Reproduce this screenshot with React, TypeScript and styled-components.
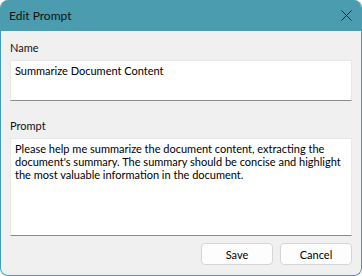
import styled, { createGlobalStyle } from 'styled-components';

const GlobalStyle = createGlobalStyle`
  html, body {
    margin: 0;
    padding: 0;
    background: #ffffff;
  }
  body {
    font-family: Lato, "Noto Sans", sans-serif;
  }
`;

const Window = styled.div`
  width: 362px;
  height: 276px;
  box-sizing: border-box;
  border: 1px solid #4a9cae;
  border-top: none;
  border-radius: 8px;
  overflow: hidden;
  background: #f0f0f0;
  display: flex;
  flex-direction: column;
`;

const TitleBar = styled.div`
  height: 31px;
  flex: none;
  background: #4a9cae;
  display: flex;
  align-items: center;
  justify-content: space-between;
  padding: 0 7px 0 8px;
  color: #111;
  font-size: 12px;
`;

const CloseButton = styled.button`
  border: none;
  background: transparent;
  padding: 0;
  width: 16px;
  height: 16px;
  display: flex;
  align-items: center;
  justify-content: center;
  cursor: pointer;
`;

const Body = styled.div`
  flex: 1;
  display: flex;
  flex-direction: column;
  padding: 9px;
`;

const Label = styled.div<{ $top?: number }>`
  font-size: 11px;
  line-height: 16px;
  color: #111;
  margin-top: ${(p) => p.$top ?? 0}px;
  margin-bottom: 4px;
`;

const Field = styled.div<{ $height: number }>`
  box-sizing: border-box;
  height: ${(p) => p.$height}px;
  background: #ffffff;
  border: 1px solid #e8e8e8;
  border-bottom-color: #8a8a8a;
  padding: 3px 5px 0 4px;
  font-size: 11px;
  line-height: 13px;
  color: #000;
`;

const Footer = styled.div`
  display: flex;
  justify-content: flex-end;
  gap: 7px;
  margin-top: 7px;
`;

const Button = styled.button<{ $width: number }>`
  width: ${(p) => p.$width}px;
  height: 22px;
  box-sizing: border-box;
  border: 1px solid #d6d6d6;
  border-radius: 4px;
  background: #fdfdfd;
  font-family: inherit;
  font-size: 11px;
  color: #000;
  padding: 0;
`;

export default function App() {
  return (
    <>
      <GlobalStyle />
      <Window>
        <TitleBar>
          <span>Edit Prompt</span>
          <CloseButton aria-label="Close">
            <svg width="11" height="11" viewBox="0 0 11 11">
              <path d="M0.5 0.5 L10.5 10.5 M10.5 0.5 L0.5 10.5" stroke="#1b1b1b" strokeWidth="1" />
            </svg>
          </CloseButton>
        </TitleBar>
        <Body>
          <Label>Name</Label>
          <Field $height={41}>Summarize Document Content</Field>
          <Label $top={17}>Prompt</Label>
          <Field $height={98}>
            Please help me summarize the document content, extracting the document's summary. The
            summary should be concise and highlight the most valuable information in the document.
          </Field>
          <Footer>
            <Button $width={72}>Save</Button>
            <Button $width={72}>Cancel</Button>
          </Footer>
        </Body>
      </Window>
    </>
  );
}
